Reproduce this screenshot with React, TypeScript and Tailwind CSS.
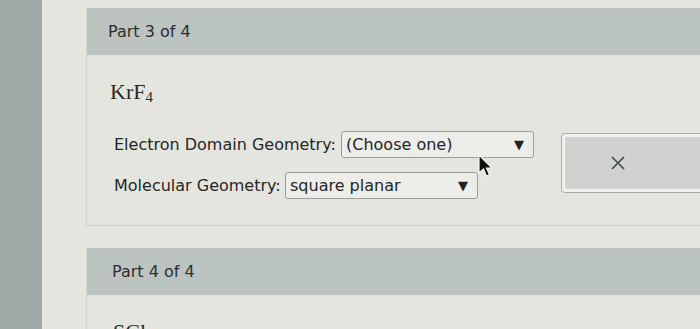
import React from "react";

const sans = { fontFamily: '"DejaVu Sans", Verdana, sans-serif' };
const serif = { fontFamily: '"Liberation Serif", "Times New Roman", serif' };

function Select({ value, width }: { value: string; width: string }) {
  return (
    <div
      className={`flex h-[27px] items-center justify-between rounded-[3px] border border-[#9c9d99] bg-[#ededea] pl-[4px] pr-[9px] text-[16px] text-[#262626] ${width}`}
      style={sans}
    >
      <span>{value}</span>
      <span className="text-[13px] text-[#222]">▼</span>
    </div>
  );
}

export default function App() {
  return (
    <div className="flex h-[329px] w-[700px] overflow-hidden bg-[#e5e5e0]">
      <div className="w-[42px] shrink-0 bg-[#9fa8a7]" />
      <div className="relative flex-1 pl-[44px] pt-[8px]">
        {/* Part 3 card */}
        <div className="border-l border-b border-[#d3d3ce]">
          <div className="flex h-[47px] items-center bg-[#bcc4c2] pl-[21px] text-[16px] text-[#2e2e2e]" style={sans}>
            Part 3 of 4
          </div>
          <div className="h-[170px] pl-[23px] pt-[25px]">
            <div className="text-[22px] leading-[24px] text-[#2a2a2a]" style={serif}>
              KrF<sub className="relative top-[3px] text-[15px]">4</sub>
            </div>
            <div className="mt-[27px] flex items-center pl-[4px]">
              <div className="w-[227px] text-[16px] text-[#262626]" style={sans}>
                Electron Domain Geometry:
              </div>
              <Select value="(Choose one)" width="w-[193px]" />
            </div>
            <div className="mt-[14px] flex items-center pl-[4px]">
              <div className="w-[171px] text-[16px] text-[#262626]" style={sans}>
                Molecular Geometry:
              </div>
              <Select value="square planar" width="w-[193px]" />
            </div>
          </div>
        </div>
        {/* X button */}
        <div className="absolute left-[519px] top-[133px] h-[60px] w-[160px] rounded-[4px] border border-[#a9aaa6] bg-[#f0f0ec] p-[3px]">
          <div className="flex h-full w-full items-center justify-start rounded-[2px] bg-[#cfd2cf] pl-[46px]">
            <svg width="14" height="14" viewBox="0 0 14 14">
              <path d="M1 1L13 13M13 1L1 13" stroke="#3b4a50" strokeWidth="1.6" />
            </svg>
          </div>
        </div>
        {/* cursor */}
        <svg className="absolute left-[435px] top-[154px]" width="18" height="26" viewBox="0 0 18 26">
          <path d="M2 1L2 19L6.5 15L9.5 22L12.5 20.7L9.5 14L15 14Z" fill="#111" stroke="#f4f4f4" strokeWidth="1.2" />
        </svg>
        {/* Part 4 */}
        <div className="mt-[22px] border-l border-[#d3d3ce]">
          <div className="flex h-[47px] items-center bg-[#bcc4c2] pl-[25px] text-[16px] text-[#2e2e2e]" style={sans}>
            Part 4 of 4
          </div>
          <div className="pl-[26px] pt-[25px] text-[22px] leading-[24px] text-[#2a2a2a]" style={serif}>
            SCl
          </div>
        </div>
      </div>
    </div>
  );
}
